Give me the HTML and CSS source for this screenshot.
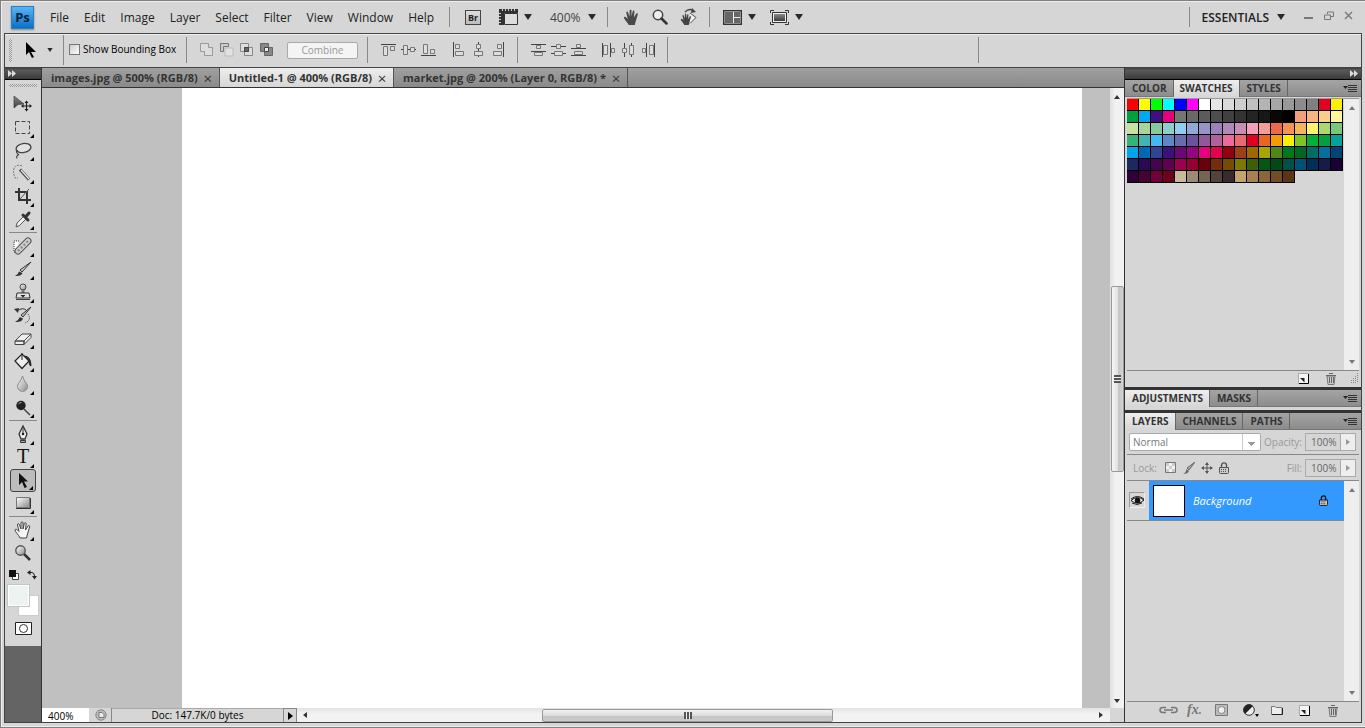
FILE: index.html
```html
<!DOCTYPE html>
<html lang="en">
<head>
  <meta charset="UTF-8">
  <title>Untitled-1 @ 400% (RGB/8)</title>
  <link rel="stylesheet" href="styles.css">
</head>
<body>
  <!-- shared shapes -->
  <svg class="defs" width="0" height="0" aria-hidden="true">
    <defs>
      <linearGradient id="metal" x1="0" y1="0" x2="1" y2="1">
        <stop offset="0" stop-color="#fff"/><stop offset="1" stop-color="#8a8a8a"/>
      </linearGradient>
      <linearGradient id="dark" x1="0" y1="0" x2="0" y2="1">
        <stop offset="0" stop-color="#888"/><stop offset="1" stop-color="#3c3c3c"/>
      </linearGradient>
      <symbol id="down" viewBox="0 0 8 6"><path d="M0 0h8L4 6z" fill="#2a2a2a"/></symbol>
      <symbol id="panel-menu" viewBox="0 0 14 9">
        <path d="M0 2h5L2.500 5z" fill="#222"/><path d="M5 1.500h9M5 3.500h9M5 5.500h9M5 7.500h9" stroke="#333"/>
      </symbol>
      <symbol id="hand" viewBox="0 0 18 18">
        <path d="M6 17C5 14 1 11 1 9c0-1 1.500-1 2.500 0L5 10.500 3.500 4C3.300 2.500 5 2.300 5.400 3.600L7 8V2c0-1.500 2-1.500 2 0v6l1.300-5.500c.4-1.300 2-.9 1.800.5L11.500 9 14 5c.8-1.100 2.100-.2 1.600 1L13.500 13l-1 4z"/>
      </symbol>
      <symbol id="arrow" viewBox="0 0 12 16">
        <path d="M1 0v13l3-3 3 6 2-1-3-5h5z" fill="#000"/>
      </symbol>
      <symbol id="new-page" viewBox="0 0 11 11">
        <path d="M.5.5h10v10h-10z" fill="#f4f4f4" stroke="#aaa"/>
        <path d="M1 10.500h9.500V1" fill="none" stroke="#000"/><path d="M2 5h4.500v4.500z" fill="#222"/>
      </symbol>
      <symbol id="trash" viewBox="0 0 12 13">
        <path d="M2 4h8l-1 8.500H3z" fill="#ccc" stroke="#777"/>
        <path d="M1 3.500h10M4 1.500h4M4.500 5v6M6.500 5v6M8.500 5v6" stroke="#666" fill="none"/>
      </symbol>
      <symbol id="padlock" viewBox="0 0 10 12">
        <path d="M2.500 6V3.500C2.500 0 7.500 0 7.500 3.500V6" fill="none" stroke="currentColor" stroke-width="1.400"/>
        <path d="M.5 5.500h9v5q0 1-1 1h-7q-1 0-1-1z" fill="#ccc" stroke="currentColor"/>
        <path d="M2 7.500h6M2 9.500h6" stroke="currentColor" stroke-dasharray="1 1"/>
      </symbol>
    </defs>
  </svg>

  <div class="app">
    <!-- Application bar -->
    <header class="app-bar">
      <span class="logo">Ps</span>
      <nav class="menus">
        <button>File</button><button>Edit</button><button>Image</button><button>Layer</button><button>Select</button><button>Filter</button><button>View</button><button>Window</button><button>Help</button>
      </nav>
      <div class="bar-group">
        <button class="bridge">Br</button>
        <button class="drop" aria-label="View extras">
          <svg width="19" height="16" viewBox="0 0 19 16"><path d="M0 0h19v4H5v12H0z" fill="#333"/><path d="M5.500 4.500h13v11h-13z" fill="#ddd" stroke="#333"/><path d="M3 1h15M1 4v12" stroke="#ccc" stroke-width="2" stroke-dasharray="1 2"/></svg>
          <svg width="8" height="6"><use href="#down"/></svg>
        </button>
        <button class="drop zoom-level">400% <svg width="8" height="6"><use href="#down"/></svg></button>
      </div>
      <div class="bar-group hands">
        <button aria-label="Hand"><svg width="17" height="17" fill="#4a4a4a"><use href="#hand"/></svg></button>
        <button aria-label="Zoom"><svg width="16" height="16" viewBox="0 0 16 16"><circle cx="6" cy="6" r="4.700" fill="#eee" stroke="#444" stroke-width="1.500"/><path d="M9.500 9.500l5 5" stroke="#333" stroke-width="2.500" stroke-linecap="round"/></svg></button>
        <button aria-label="Rotate view"><svg width="18" height="18" viewBox="0 0 18 18"><path d="M10 5l6 4.500-6 6" fill="#eee" stroke="#555"/><g transform="translate(0 5) scale(.7)" fill="#444"><use href="#hand" width="18" height="18"/></g><path d="M5 4q4-4 8-1.500" fill="none" stroke="#444" stroke-width="1.300"/><path d="M12 0l4 4-5 1z" fill="#444"/></svg></button>
      </div>
      <div class="bar-group screens">
        <button class="drop" aria-label="Arrange documents">
          <svg width="19" height="15" viewBox="0 0 19 15"><path d="M.75.75h17.500v13.500H.75z" fill="#eee" stroke="#333" stroke-width="1.500"/><path d="M2 2h8v11H2zM11 2h6v5h-6zM11 8h6v5h-6z" fill="#666"/></svg>
          <svg width="8" height="6"><use href="#down"/></svg>
        </button>
        <button class="drop" aria-label="Screen mode">
          <svg width="19" height="15" viewBox="0 0 19 15"><path d="M.5 3V.5H4M15 .5h3.500V3M18.500 12v2.500H15M4 14.500H.5V12" fill="none" stroke="#333"/><path d="M2.500 2.500h14v10h-14z" fill="#eee" stroke="#333"/><path d="M4 4h11v7H4z" fill="url(#dark)"/></svg>
          <svg width="8" height="6"><use href="#down"/></svg>
        </button>
      </div>
      <div class="bar-end">
        <button class="workspace">ESSENTIALS <svg width="8" height="6"><use href="#down"/></svg></button>
        <div class="window-buttons">
          <button aria-label="Minimize"><svg width="10" height="10"><path d="M0 7h9" stroke="#777" stroke-width="2"/></svg></button>
          <button aria-label="Restore"><svg width="10" height="10"><path d="M3.500 3V1h6v4.500H7M.5 4h6v4.500h-6z" fill="none" stroke="#777"/></svg></button>
          <button aria-label="Close"><svg width="10" height="10"><path d="M1 1l7 7M8 1L1 8" stroke="#777" stroke-width="1.400"/></svg></button>
        </div>
      </div>
    </header>

    <div class="frame">
      <!-- Tool options -->
      <div class="options">
        <div class="opt current-tool">
          <i class="grip-v"></i>
          <svg width="12" height="16"><use href="#arrow"/></svg>
          <svg width="6" height="4"><use href="#down"/></svg>
        </div>
        <div class="opt bounding">
          <input type="checkbox" id="bbox"><label for="bbox">Show Bounding Box</label>
        </div>
        <div class="opt shapes">
          <svg width="14" height="14" viewBox="0 0 14 14"><path d="M.5.500h8v4h4v8h-8v-4h-4z" fill="#ddd" stroke="#999"/></svg>
          <svg width="14" height="14" viewBox="0 0 14 14"><path d="M.5 8.500v-8h8v3h-5v5z" fill="#ccc" stroke="#777"/><path d="M5 5h8v8H5z" fill="#e2e2e2" stroke="#bbb"/></svg>
          <svg width="14" height="14" viewBox="0 0 14 14"><path d="M.5.500h8v8h-8zM4.500 4.500h8v8h-8z" fill="#ddd" stroke="#888"/><path d="M4.500 4.500h4v4h-4z" fill="#666" stroke="#444"/></svg>
          <svg width="14" height="14" viewBox="0 0 14 14"><path d="M.5.500h8v8h-8zM4.500 4.500h8v8h-8z" fill="#888" stroke="#666"/><path d="M4.500 4.500h4v4h-4z" fill="#eee" stroke="#444"/></svg>
          <button class="combine" disabled>Combine</button>
        </div>
        <div class="opt aligns">
          <svg width="16" height="14" viewBox="0 0 16 14"><path d="M0 1.500h15" stroke="#444"/><path d="M2.500 3.500h4v9h-4zM9.500 3.500h4v4h-4z" fill="#ddd" stroke="#777"/></svg>
          <svg width="16" height="14" viewBox="0 0 16 14"><path d="M0 6.500h15" stroke="#444"/><path d="M2.500 2.500h4v9h-4zM9.500 4.500h4v4h-4z" fill="#ddd" stroke="#777"/></svg>
          <svg width="16" height="14" viewBox="0 0 16 14"><path d="M0 12.500h15" stroke="#444"/><path d="M2.500 1.500h4v9h-4zM9.500 6.500h4v4h-4z" fill="#ddd" stroke="#777"/></svg>
          <svg class="gap" width="16" height="16" viewBox="0 0 16 16"><path d="M2.500 0v15" stroke="#444"/><path d="M4.500 2.500h4v4h-4zM4.500 9.500h8v4h-8z" fill="#ddd" stroke="#777"/></svg>
          <svg width="16" height="16" viewBox="0 0 16 16"><path d="M7.500 0v15" stroke="#444"/><path d="M5.500 2.500h4v4h-4zM3.500 9.500h8v4h-8z" fill="#ddd" stroke="#777"/></svg>
          <svg width="16" height="16" viewBox="0 0 16 16"><path d="M12.500 0v15" stroke="#444"/><path d="M6.500 2.500h4v4h-4zM2.500 9.500h8v4h-8z" fill="#ddd" stroke="#777"/></svg>
        </div>
        <div class="opt aligns">
          <svg width="16" height="14" viewBox="0 0 16 14"><path d="M0 1.500h15M0 8.500h15" stroke="#444"/><path d="M5.500 2.500h4v3h-4zM3.500 9.500h8v3h-8z" fill="#ddd" stroke="#777"/></svg>
          <svg width="16" height="14" viewBox="0 0 16 14"><path d="M0 3.500h15M0 10.500h15" stroke="#444"/><path d="M5.500 1.500h4v4h-4zM3.500 8.500h8v4h-8z" fill="#ddd" stroke="#777"/></svg>
          <svg width="16" height="14" viewBox="0 0 16 14"><path d="M0 5.500h15M0 12.500h15" stroke="#444"/><path d="M5.500 1.500h4v3h-4zM3.500 8.500h8v3h-8z" fill="#ddd" stroke="#777"/></svg>
          <svg class="gap" width="16" height="14" viewBox="0 0 16 14"><path d="M1.500 0v14M9.500 0v14" stroke="#444"/><path d="M2.500 2.500h4v9h-4zM10.500 5.500h3v4h-3z" fill="#ddd" stroke="#777"/></svg>
          <svg width="16" height="14" viewBox="0 0 16 14"><path d="M3.500 0v14M10.500 0v14" stroke="#444"/><path d="M1.500 5.500h4v4h-4zM8.500 2.500h4v9h-4z" fill="#ddd" stroke="#777"/></svg>
          <svg width="16" height="14" viewBox="0 0 16 14"><path d="M5.500 0v14M13.500 0v14" stroke="#444"/><path d="M1.500 5.500h3v4h-3zM8.500 2.500h4v9h-4z" fill="#ddd" stroke="#777"/></svg>
        </div>
        <div class="opt spacer"></div>
      </div>

      <div class="workspace-row">
        <!-- Tools -->
        <aside class="toolbox">
          <div class="dock-head"><svg width="8" height="7"><path d="M0 0l4 3.500L0 7zM4 0l4 3.500L4 7z" fill="#ddd"/></svg></div>
          <div class="tools">
            <i class="grip-h"></i>
            <button class="tool" aria-label="Move"><svg viewBox="0 0 26 23"><path d="M4 3v12l4-3.500 6-.5z" fill="url(#dark)" stroke="#333" stroke-width=".6"/><path d="M16.500 8.500v9M12 13h9" stroke="#222" stroke-width="1.200"/><path d="M14.500 10l2-2.500 2 2.500zM14.500 16l2 2.500 2-2.500zM13.500 11L11 13l2.500 2zM19.500 11l2.500 2-2.500 2z" fill="#222"/></svg></button>
            <button class="tool more" aria-label="Marquee"><svg viewBox="0 0 26 23"><path d="M5.500 5.500h14v12h-14z" fill="none" stroke="#444" stroke-dasharray="4 2"/></svg></button>
            <button class="tool more" aria-label="Lasso"><svg viewBox="0 0 26 23"><ellipse cx="13.500" cy="9" rx="7.500" ry="4.500" transform="rotate(-10 13.500 9)" fill="#e2e2e2" stroke="#444" stroke-width="1.400"/><path d="M8 11.500q-2.500.5-1 2.500t2 1.500q-3 1-2 4" fill="none" stroke="#444" stroke-width="1.200"/></svg></button>
            <button class="tool more" aria-label="Quick selection"><svg viewBox="0 0 26 23"><path d="M12 4q-4-2-7 1t0 11h3" fill="none" stroke="#777" stroke-dasharray="2 1"/><path d="M10 7.500l9 10" stroke="#444" stroke-width="3"/><path d="M11 8l8 9" stroke="#eee" stroke-width="1.200"/></svg></button>
            <button class="tool more" aria-label="Crop"><svg viewBox="0 0 26 23"><path d="M9 3v12h12M5 7h12v12" fill="none" stroke="#333" stroke-width="2"/><path d="M10 14l9-10" stroke="#555"/></svg></button>
            <button class="tool more" aria-label="Eyedropper"><svg viewBox="0 0 26 23"><path d="M6 19l1-4 7-7 2.500 2.500-7 7z" fill="#eee" stroke="#555"/><path d="M13 7l5 5M15.500 9l3.500-4" stroke="#333" stroke-width="3" stroke-linecap="round"/></svg></button>
            <hr>
            <button class="tool more" aria-label="Healing brush"><svg viewBox="0 0 26 23"><path d="M9 6H4v11h3" fill="#fff" stroke="#333" stroke-dasharray="1 1"/><path d="M8 16L18 6" stroke="#555" stroke-width="7" stroke-linecap="round"/><path d="M8 16L18 6" stroke="#ccc" stroke-width="5" stroke-linecap="round"/><path d="M8 16L18 6" stroke="#888" stroke-width="2" stroke-dasharray="2 2"/></svg></button>
            <button class="tool more" aria-label="Brush"><svg viewBox="0 0 26 23"><path d="M21 4l-9 10-2-2z" fill="#ccc" stroke="#333"/><path d="M5 18q3-1 4-4.500l3.500 1.500q-1 3.500-7.500 3z" fill="#333"/></svg></button>
            <button class="tool more" aria-label="Clone stamp"><svg viewBox="0 0 26 23"><circle cx="13" cy="6" r="3" fill="url(#metal)" stroke="#444"/><path d="M11.500 9h3v3.500h-3z" fill="#777"/><path d="M7 12h12l1 5H6z" fill="#e4e4e4" stroke="#333"/><path d="M10.500 14h5L13 16.500z" fill="#222"/><path d="M6 18.500h14" stroke="#444"/></svg></button>
            <button class="tool more" aria-label="History brush"><svg viewBox="0 0 26 23"><path d="M21 3l-8 10-2-2z" fill="#bbb" stroke="#333"/><path d="M5 18q3-1 5-5l3 1.500q-1 4-8 3.500z" fill="#333"/><path d="M7 7q6-4 9-1" fill="none" stroke="#333"/><path d="M4 5l5-1-1 5z" fill="#333"/><path d="M18 10q4 6-3 9" fill="none" stroke="#333" stroke-dasharray="1 1"/></svg></button>
            <button class="tool more" aria-label="Eraser"><svg viewBox="0 0 26 23"><path d="M5 14l7-7h9l-7 7zM5 14v3.500h9V14zM14 17.500l7-7V7l-7 7z" fill="#eee" stroke="#444"/></svg></button>
            <button class="tool more" aria-label="Paint bucket"><svg viewBox="0 0 26 23"><path d="M5 11l7-7 7 7-7 7.500z" fill="#eee" stroke="#222" stroke-width="1.200"/><path d="M12 10V3M14 6q7 0 7 10-2 0-2-5z" stroke="#222" fill="#333"/></svg></button>
            <button class="tool more" aria-label="Blur"><svg viewBox="0 0 26 23"><path d="M12.500 3q1 4 4 7.500c3 4-1 8-4 8s-7-4-4-8q3-3.500 4-7.500z" fill="url(#metal)" stroke="#888"/></svg></button>
            <button class="tool more" aria-label="Burn"><svg viewBox="0 0 26 23"><path d="M14 13l6 6" stroke="#444" stroke-width="1.500"/><circle cx="11" cy="9.500" r="4.700" fill="#222"/><path d="M8.500 8q1-1.500 3-1.500" stroke="#bbb" fill="none"/></svg></button>
            <hr>
            <button class="tool more" aria-label="Pen"><svg viewBox="0 0 26 23"><path d="M13 3l-4 8 2 5h4l2-5z" fill="#eee" stroke="#333" stroke-width="1.300"/><path d="M13 5v6M10.500 17.500h5v2h-5z" stroke="#333" fill="#aaa"/><circle cx="13" cy="11" r="1.300" fill="#222"/></svg></button>
            <button class="tool more type">T</button>
            <button class="tool more active" aria-label="Path selection"><svg viewBox="0 0 26 23"><path d="M9 4v12l3-3 2.500 6 2.500-1-3-5.500h4z" fill="#111"/></svg></button>
            <button class="tool more" aria-label="Rectangle"><svg viewBox="0 0 26 23"><path d="M6.500 5.500h13v10h-13z" fill="url(#metal)" stroke="#777"/><path d="M6 16.500h14.500V6" fill="none" stroke="#333"/></svg></button>
            <hr>
            <button class="tool more" aria-label="Hand"><svg viewBox="0 0 26 23"><g fill="#f6f6f6" stroke="#444"><use href="#hand" x="4" y="2" width="18" height="18"/></g></svg></button>
            <button class="tool" aria-label="Zoom"><svg viewBox="0 0 26 23"><path d="M14 12l6 6" stroke="#333" stroke-width="2.500"/><circle cx="10.500" cy="8.500" r="4.700" fill="url(#metal)" stroke="#555" stroke-width="1.400"/></svg></button>
            <div class="color-tools">
              <svg width="10" height="10"><path d="M3.500 3.500h6v6h-6z" fill="#fff" stroke="#444"/><path d="M0 0h7v7H0z" fill="#111"/></svg>
              <svg width="10" height="10"><path d="M2 2.500h3q2.500 0 2.500 4" fill="none" stroke="#222"/><path d="M3.500 0v5L0 2.500zM5 6h5l-2.500 3.500z" fill="#222"/></svg>
            </div>
            <div class="color-wells"><span class="well back"></span><span class="well front"></span></div>
            <button class="quick-mask" aria-label="Quick mask"><svg width="17" height="13"><path d="M.5.500h16v12H.5z" fill="#fff" stroke="#222"/><circle cx="8.500" cy="6.500" r="4" fill="#fff" stroke="#333"/></svg></button>
          </div>
        </aside>

        <!-- Document window -->
        <main class="document">
          <div class="doc-tabs">
            <div class="doc-tab">images.jpg @ 500% (RGB/8) <button aria-label="Close tab">×</button></div>
            <div class="doc-tab current">Untitled-1 @ 400% (RGB/8) <button aria-label="Close tab">×</button></div>
            <div class="doc-tab">market.jpg @ 200% (Layer 0, RGB/8) * <button aria-label="Close tab">×</button></div>
          </div>
          <div class="doc-body">
            <div class="pasteboard"><div class="paper"></div></div>
            <div class="scroll-v">
              <svg width="6" height="4"><path d="M0 4h6L3 0z" fill="#333"/></svg>
              <div class="thumb"><i></i></div>
              <svg width="6" height="4"><path d="M0 0h6L3 4z" fill="#333"/></svg>
            </div>
          </div>
          <div class="status">
            <input class="status-zoom" type="text" value="400%" aria-label="Zoom">
            <span class="status-icon"><svg width="12" height="12"><circle cx="6" cy="6" r="5.200" fill="#bbb" stroke="#888"/><path d="M4 3.500h3l2 2v3H4z" fill="#eee" stroke="#777"/></svg></span>
            <span class="doc-size">Doc: 147.7K/0 bytes</span>
            <button class="status-more" aria-label="Status options"><svg width="5" height="8"><path d="M0 0l5 4-5 4z" fill="#000"/></svg></button>
            <div class="scroll-h">
              <svg width="4" height="6"><path d="M4 0v6L0 3z" fill="#333"/></svg>
              <div class="thumb"><i></i></div>
              <svg width="4" height="6"><path d="M0 0v6l4-3z" fill="#333"/></svg>
            </div>
          </div>
        </main>

        <!-- Panels -->
        <aside class="panels">
          <div class="dock-head right"><svg width="8" height="7"><path d="M0 0l4 3.500L0 7zM4 0l4 3.500L4 7z" fill="#ddd"/></svg></div>
          <section class="panel swatches-panel">
            <div class="panel-tabs">
              <button>COLOR</button><button class="current">SWATCHES</button><button>STYLES</button>
              <svg class="panel-menu" width="14" height="9"><use href="#panel-menu"/></svg>
            </div>
            <div class="panel-scroll">
              <div class="swatches" id="swatches"></div>
              <div class="mini-scroll">
                <svg width="6" height="4"><path d="M0 4h6L3 0z" fill="#777"/></svg>
                <svg width="6" height="4"><path d="M0 0h6L3 4z" fill="#777"/></svg>
              </div>
            </div>
            <div class="panel-foot">
              <button aria-label="New swatch"><svg width="11" height="11"><use href="#new-page"/></svg></button>
              <button aria-label="Delete swatch"><svg width="12" height="13"><use href="#trash"/></svg></button>
              <svg width="10" height="10"><path d="M8.500 0v10M6.500 3v7M4.500 5v5M2.500 7v3" stroke="#888" stroke-dasharray="1 1"/></svg>
            </div>
          </section>

          <section class="panel">
            <div class="panel-tabs">
              <button class="current">ADJUSTMENTS</button><button>MASKS</button>
              <svg class="panel-menu" width="14" height="9"><use href="#panel-menu"/></svg>
            </div>
            <div class="collapsed"></div>
          </section>

          <section class="panel layers-panel">
            <div class="panel-tabs">
              <button class="current">LAYERS</button><button>CHANNELS</button><button>PATHS</button>
              <svg class="panel-menu" width="14" height="9"><use href="#panel-menu"/></svg>
            </div>
            <div class="layer-row">
              <select class="blend" aria-label="Blend mode" disabled><option>Normal</option></select>
              <label class="push" for="opacity">Opacity:</label>
              <span class="percent"><input id="opacity" type="text" value="100%" disabled><svg width="4" height="6"><path d="M0 0v6l4-3z" fill="#999"/></svg></span>
            </div>
            <div class="layer-row locks">
              <span>Lock:</span>
              <svg width="12" height="12"><path d="M.5.500h10v10H.5z" fill="#f2f2f2" stroke="#777"/><path d="M1 1h3v3H1zM7 1h3v3H7zM4 4h3v3H4zM1 7h3v3H1zM7 7h3v3H7z" fill="#ccc"/></svg>
              <svg width="12" height="12"><path d="M12 0L6 8 4 6z" fill="#aaa" stroke="#666"/><path d="M0 12q3-1 3.500-5L6 9q-1 3-6 3z" fill="#666"/></svg>
              <svg width="12" height="12"><path d="M6 1v10M1 6h10" stroke="#555"/><path d="M4 3l2-3 2 3zM4 9l2 3 2-3zM3 4L0 6l3 2zM9 4l3 2-3 2z" fill="#555"/></svg>
              <svg class="lock-all" width="10" height="12"><use href="#padlock"/></svg>
              <label class="push" for="fill">Fill:</label>
              <span class="percent"><input id="fill" type="text" value="100%" disabled><svg width="4" height="6"><path d="M0 0v6l4-3z" fill="#999"/></svg></span>
            </div>
            <div class="panel-scroll layer-list">
              <div class="layers">
                <div class="layer">
                  <button class="eye" aria-label="Visibility"><svg width="13" height="11"><path d="M0 5.500Q6 0 13 5q-6 6-13 .5z" fill="#fff" stroke="#111"/><circle cx="6.500" cy="5.500" r="2.800" fill="#111"/><path d="M0 4q6-5 13 0M1 8q5 3 10 0" fill="none" stroke="#222"/></svg></button>
                  <div class="layer-body">
                    <span class="thumbnail"></span>
                    <em>Background</em>
                    <svg class="layer-lock" width="9" height="11"><use href="#padlock"/></svg>
                  </div>
                </div>
              </div>
              <div class="mini-scroll">
                <svg width="6" height="4"><path d="M0 4h6L3 0z" fill="#777"/></svg>
                <svg width="6" height="4"><path d="M0 0h6L3 4z" fill="#777"/></svg>
              </div>
            </div>
            <div class="panel-foot layer-foot">
              <button aria-label="Link"><svg width="19" height="8"><path d="M7 1.500H4q-3 0-3 2.500t3 2.500h3M12 1.500h3q3 0 3 2.500t-3 2.500h-3M5 4h9" fill="none" stroke="#777" stroke-width="1.500"/></svg></button>
              <button class="fx">fx<small>.</small></button>
              <button aria-label="Mask"><svg width="14" height="12"><path d="M.5.500h12v11H.5z" fill="#bbb" stroke="#777"/><circle cx="6.500" cy="6" r="3.500" fill="#eee" stroke="#888"/></svg></button>
              <button aria-label="Adjustment"><svg width="16" height="13"><circle cx="6" cy="6" r="5.300" fill="#eee" stroke="#333"/><path d="M2 10A5.500 5.500 0 0 1 10 2z" fill="#222"/><path d="M12 10h4l-2 3z" fill="#000"/></svg></button>
              <button aria-label="Group"><svg width="12" height="10"><path d="M.5 1.500H4l1 1h6v7H.5z" fill="#eee" stroke="#777"/><path d="M1 9.500h10.500V3" fill="none" stroke="#222"/></svg></button>
              <button aria-label="New layer"><svg width="11" height="11"><use href="#new-page"/></svg></button>
              <button aria-label="Delete layer"><svg width="12" height="13"><use href="#trash"/></svg></button>
            </div>
          </section>
        </aside>
      </div>
    </div>
  </div>
  <script src="script.js"></script>
</body>
</html>
```
FILE: styles.css
```css
* {
  box-sizing: border-box;
}

body {
  margin: 0;
  height: 100vh;
  overflow: hidden;
  background: #d6d6d6;
  font-family: "Open Sans", "Noto Sans", sans-serif;
  font-size: 10px;
  color: #222;
}

button {
  background: none;
  border: 0;
  padding: 0;
  margin: 0;
  font: inherit;
  color: inherit;
  display: inline-flex;
  align-items: center;
  justify-content: center;
}

svg {
  display: block;
  flex: none;
}

.defs {
  position: absolute;
}

.app {
  height: 100vh;
  display: flex;
  flex-direction: column;
  border: 1px solid #808080;
  border-width: 1px 0 1px 1px;
  padding: 0 3px 4px;
  box-shadow: inset 1px 1px 0 #eee, inset 0 -1px 0 #eee;
}

/* application bar */
.app-bar {
  height: 32px;
  flex: none;
  display: flex;
  align-items: center;
  font-size: 12px;
}

.logo {
  width: 23px;
  height: 23px;
  margin-left: 7px;
  border: 1px solid #2a7fc0;
  background: linear-gradient(#5ab4f4, #0a6fc6);
  box-shadow: 0 1px 2px #888;
  color: #0a2038;
  font-size: 13px;
  font-weight: bold;
  line-height: 20px;
  text-align: center;
}

.menus {
  display: flex;
  width: 415px;
  padding-left: 16px;
  gap: 15px;
}

.bar-group {
  display: flex;
  align-items: center;
  gap: 18px;
  height: 20px;
  padding-left: 15px;
  border-left: 1px solid #888;
}

.bridge {
  width: 16px;
  height: 15px;
  border: 1px solid #444;
  background: linear-gradient(#ddd, #bbb);
  font-size: 9px;
  font-weight: bold;
}

.drop {
  gap: 6px;
}

.zoom-level {
  width: 46px;
  justify-content: space-between;
  color: #444;
}

.bar-group:first-of-type {
  width: 158px;
}

.hands {
  width: 102px;
  gap: 12px;
}

.screens {
  padding-left: 13px;
  gap: 14px;
}

.bar-end {
  margin-left: auto;
  display: flex;
  align-items: center;
  height: 20px;
  padding-left: 12px;
  border-left: 1px solid #888;
}

.workspace {
  gap: 8px;
  font-weight: 600;
}

.window-buttons {
  display: flex;
  gap: 10px;
  padding: 0 8px 2px 19px;
}

/* framed area below the bar */
.frame {
  flex: 1;
  min-height: 0;
  display: flex;
  flex-direction: column;
  border: 1px solid #444;
}

.options {
  flex: none;
  height: 33px;
  display: flex;
  align-items: center;
  padding-bottom: 2px;
  border-top: 1px solid #eee;
}

.opt {
  display: flex;
  align-items: center;
  height: 26px;
  border-right: 1px solid #888;
}

.current-tool {
  width: 59px;
  height: 30px;
  gap: 13px;
  padding-left: 4px;
}

.grip-v {
  width: 3px;
  height: 23px;
  background: repeating-conic-gradient(#999 0 25%, #ddd 0 50%) 0 0 / 2px 2px;
}

.current-tool svg + svg {
  margin-left: -3px;
}

.bounding {
  width: 123px;
  padding: 0 0 2px 5px;
  gap: 3px;
  color: #000;
}

.bounding input {
  appearance: none;
  width: 11px;
  height: 11px;
  margin: 0;
  border: 1px solid #777;
  background: linear-gradient(135deg, #ccc, #fff);
}

.shapes {
  width: 181px;
  padding-left: 13px;
  gap: 6px;
}

.combine {
  width: 71px;
  height: 17px;
  margin-left: 7px;
  padding-bottom: 1px;
  border: 1px solid #aaa;
  border-radius: 2px;
  background: #f4f4f4;
  color: #999;
}

.aligns {
  width: 150px;
  padding-left: 13px;
  gap: 4px;
}

.aligns .gap {
  margin-left: 10px;
}

.spacer {
  width: 311px;
}

.workspace-row {
  flex: 1;
  min-height: 0;
  display: flex;
}

.dock-head {
  flex: none;
  height: 13px;
  padding: 3px;
  background: linear-gradient(#3c3c3c, #585858 30%, #3a3a3a);
  border-bottom: 1px solid #000;
}

.dock-head.right {
  display: flex;
  justify-content: flex-end;
}

/* tools */
.toolbox {
  width: 37px;
  flex: none;
  background: #646464;
  border-right: 1px solid #333;
}

.tools {
  display: flex;
  flex-direction: column;
  align-items: center;
  height: 566px;
  background: #d6d6d6;
}

.grip-h {
  width: 28px;
  height: 3px;
  margin: 4px 0 6px;
  background: repeating-conic-gradient(#999 0 25%, #ddd 0 50%) 0 0 / 2px 2px;
}

.tool {
  position: relative;
  width: 26px;
  height: 23px;
}

.tool svg {
  width: 26px;
  height: 23px;
}

.tool.more::after {
  content: "";
  position: absolute;
  right: 2px;
  bottom: 1px;
  border: 2px solid #000;
  border-top-color: transparent;
  border-left-color: transparent;
}

.tool.active {
  border: 1px solid #444;
  border-radius: 3px;
  background: #bcbcbc;
}

.tool.type {
  padding-bottom: 2px;
  font: 20px "Liberation Serif", serif;
  color: #111;
}

.tools hr {
  width: 28px;
  height: 1px;
  margin: 1px 0 2px;
  border: 0;
  background: #888;
}

.color-tools {
  display: flex;
  gap: 8px;
  padding: 5px 0 4px;
}

.color-wells {
  position: relative;
  width: 31px;
  height: 31px;
  margin-top: 1px;
}

.well {
  position: absolute;
  width: 21px;
  height: 21px;
  border: 1px solid #ccc;
  background: #fff;
}

.well.front {
  left: 0;
  top: 0;
  border-color: #fff;
  background: #edf3f0;
  outline: 1px solid #c4c4c4;
}

.well.back {
  right: 0;
  bottom: 0;
}

.quick-mask {
  margin-top: 6px;
}

/* document */
.document {
  flex: 1;
  min-width: 0;
  display: flex;
  flex-direction: column;
}

.doc-tabs {
  flex: none;
  height: 21px;
  display: flex;
  background: linear-gradient(#a0a0a0, #8a8a8a);
  border-top: 1px solid #444;
  border-bottom: 1px solid #333;
}

.doc-tab {
  display: flex;
  align-items: center;
  gap: 5px;
  padding: 0 6px 0 9px;
  border-right: 1px solid #555;
  font-size: 11px;
  font-weight: bold;
  color: #333;
}

.doc-tab button {
  width: 10px;
  font-size: 15px;
  font-weight: normal;
  line-height: 14px;
}

.doc-tab.current {
  background: linear-gradient(#eee, #d6d6d6);
}

.doc-body {
  flex: 1;
  min-height: 0;
  display: flex;
}

.pasteboard {
  flex: 1;
  display: flex;
  background: #c0c0c0;
  padding: 0 28px 0 140px;
}

.paper {
  flex: 1;
  background: #fff;
}

.scroll-v {
  width: 14px;
  display: flex;
  flex-direction: column;
  align-items: center;
  padding: 7px 0 5px;
  background: linear-gradient(90deg, #e0e0e0, #f2f2f2 40%);
}

.scroll-v .thumb {
  width: 13px;
  height: 186px;
  margin: 187px 0 auto;
  background: linear-gradient(90deg, #f6f6f6, #e2e2e2 50%, #c4c4c8 60%, #d4d4d4);
}

.thumb {
  display: flex;
  align-items: center;
  justify-content: center;
  border: 1px solid #999;
  border-radius: 2px;
}

.scroll-v .thumb i {
  width: 7px;
  height: 8px;
  background: repeating-linear-gradient(#555 0 2px, #eee 2px 3px);
}

.status {
  flex: none;
  height: 14px;
  display: flex;
  background: #d6d6d6;
  color: #000;
}

.status-zoom {
  width: 47px;
  height: 14px;
  padding: 1px 0 0 6px;
  border: 0;
  background: #fff;
  font: inherit;
}

.status-icon {
  width: 23px;
  padding: 1px 0 0 6px;
  border-right: 1px solid #888;
}

.doc-size {
  width: 171px;
  line-height: 13px;
  text-align: center;
  border-top: 1px solid #aaa;
}

.status-more {
  width: 14px;
  border: 1px solid #888;
  border-width: 1px 1px 0;
}

.scroll-h {
  flex: 1;
  display: flex;
  align-items: center;
  padding: 0 7px 0 6px;
  margin-right: 14px;
  background: linear-gradient(#e2e2e2, #f2f2f2 40%);
}

.scroll-h .thumb {
  width: 291px;
  height: 13px;
  margin: 0 auto 0 235px;
  background: linear-gradient(#f2f2f2, #ddd 50%, #c4c4c8 60%, #ccc);
}

.scroll-h .thumb i {
  width: 8px;
  height: 7px;
  background: repeating-linear-gradient(90deg, #555 0 2px, #eee 2px 3px);
}

/* panels */
.panels {
  width: 237px;
  flex: none;
  display: flex;
  flex-direction: column;
  border-left: 1px solid #333;
}

.panel {
  display: flex;
  flex-direction: column;
  background: #d6d6d6;
}

.swatches-panel {
  height: 307px;
}

.panel + .panel {
  border-top: 3px solid #333;
}

.panel-tabs {
  flex: none;
  display: flex;
  height: 17px;
  background: linear-gradient(#a4a4a4, #8c8c8c);
  border-bottom: 1px solid #777;
  font-weight: bold;
  color: #333;
}

.panel-tabs button {
  padding: 0 6px 0 7px;
  border-right: 1px solid #666;
}

.panel-tabs .current {
  margin-bottom: -1px;
  padding: 0 6px 1px;
  background: linear-gradient(#eee, #d6d6d6);
}

.panel-tabs .current:first-child {
  padding-left: 7px;
}

.panel-menu {
  margin: 4px 4px 0 auto;
}

.panel-scroll {
  flex: 1;
  min-height: 0;
  display: flex;
  margin: 1px 2px 0;
  border-top: 1px solid #999;
}

.swatches {
  flex: 1;
  display: grid;
  grid-template-columns: repeat(18, 12px);
  grid-auto-rows: 12px;
}

.swatch {
  border: 1px solid #000;
  border-width: 0 1px 1px 0;
}

.mini-scroll {
  width: 15px;
  display: flex;
  flex-direction: column;
  justify-content: space-between;
  align-items: center;
  padding: 7px 0 6px;
  background: #eee;
}

.panel-foot {
  flex: none;
  display: flex;
  justify-content: flex-end;
  align-items: center;
  height: 17px;
  margin: 0 2px;
  padding-bottom: 2px;
  border-top: 1px solid #888;
  gap: 16px;
}

.panel-foot > svg {
  margin-left: -4px;
}

.collapsed {
  height: 3px;
}

.layers-panel {
  flex: 1;
  min-height: 0;
}

.layer-row {
  flex: none;
  display: flex;
  align-items: center;
  height: 25px;
  margin: 0 2px;
  padding: 0 3px 0 2px;
  border-bottom: 1px solid #888;
  color: #999;
}

.push {
  margin-left: auto;
  margin-right: 3px;
}

.blend {
  appearance: none;
  width: 132px;
  height: 18px;
  padding: 0 3px;
  border: 1px solid #aaa;
  border-radius: 2px;
  background: conic-gradient(from -45deg at 50% 100%, #aaa 25%, transparent 0) 119px 7px / 8px 4px no-repeat, linear-gradient(#ccc, #ccc) 112px 0 / 1px 18px no-repeat, #fff;
  background: linear-gradient(135deg, #999 50%, transparent 0) 122px 8px / 4px 4px no-repeat, linear-gradient(225deg, #999 50%, transparent 0) 118px 8px / 4px 4px no-repeat, linear-gradient(#ccc, #ccc) 112px 0 / 1px 18px no-repeat, #fff;
  font: inherit;
  color: #777;
  opacity: 1;
}

.percent {
  width: 51px;
  height: 18px;
  display: flex;
  align-items: center;
  border: 1px solid #aaa;
  background: #eee;
}

.percent input {
  width: 35px;
  height: 16px;
  margin-right: 5px;
  padding: 0 0 0 5px;
  border: 0;
  border-right: 1px solid #aaa;
  background: #d6d6d6;
  font: inherit;
  color: #666;
}

.locks {
  height: 26px;
  gap: 6px;
  padding-left: 6px;
}

.locks span:first-child {
  width: 26px;
}

.locks .push {
  margin-right: -3px;
}

.lock-all {
  color: #555;
}

.layer-list {
  margin-top: 0;
  border-top: 0;
}

.layers {
  flex: 1;
}

.layer {
  display: flex;
  height: 40px;
  border-bottom: 1px solid #888;
}

.eye {
  width: 16px;
  height: 16px;
  margin: 11px 4px 0 2px;
  border: 1px solid #999;
  border-right-color: #eee;
  border-bottom-color: #eee;
}

.layer-body {
  flex: 1;
  display: flex;
  align-items: center;
  padding: 0 16px 0 4px;
  background: #3399ff;
  color: #fff;
  font-size: 11px;
}

.thumbnail {
  width: 32px;
  height: 32px;
  margin-right: 8px;
  border: 1px solid #000;
  background: #fff;
}

.layer-lock {
  margin-left: auto;
  color: #111;
}

.layer-foot {
  height: 21px;
  padding: 0 0 4px 32px;
  justify-content: flex-start;
  gap: 0;
}

.layer-foot button {
  width: 28px;
  justify-content: flex-start;
}

.layer-foot .fx {
  font: italic bold 14px "Liberation Serif", serif;
  color: #777;
}
```
FILE: script.js
```js
const rows = [
  'ff0000 ffff00 00ff00 00ffff 0000ff ff00ff ffffff e6e6e6 dadada cdcdcd c0c0c0 b4b4b4 a7a7a7 999999 8c8c8c 808080 e00023 faf000',
  '00a03c 00a8ef 3f1180 e60080 757575 686868 5b5b5b 4d4d4d 404040 333333 242424 171717 080808 000000 f49e7a f6b580 fccd88 fff79a',
  'c8e2a0 a6d49c 88ca9b 8cd0cc 8dcff4 92a8d6 9694c6 9a82b8 b088ba c88eb8 f49ebc f49c9a ec6a48 f49450 f4b65a fff468 acd66e 7ac67a',
  '34b478 40b6b4 40baf0 5c88c6 666cae 6c529c 90589a b0609c ee6a9e ec6874 e00022 ea6620 f09e00 faf000 80c424 00b038 00a040 00a49c',
  '00a6ec 0068b4 304494 3e107c 6a0878 960480 e60080 e60050 940014 a04010 a06800 a8a400 528614 007820 006822 006e68 0070a0 004478',
  '1c2862 2a0a54 46044e 600050 9c0050 980030 6c000a 742e0a 784c00 7c7800 3c6008 005812 004a18 005048 005078 003058 141c48 1a0034',
  '300038 480038 720038 700022 ccb89a 9c8a74 766452 52443c 362c2c c6a26c a88052 8c6634 724e22 5c3614'
];

const grid = document.getElementById('swatches');
rows.join(' ').split(' ').forEach(hex => {
  const cell = document.createElement('span');
  cell.className = 'swatch';
  cell.style.backgroundColor = '#' + hex;
  grid.appendChild(cell);
});
```
